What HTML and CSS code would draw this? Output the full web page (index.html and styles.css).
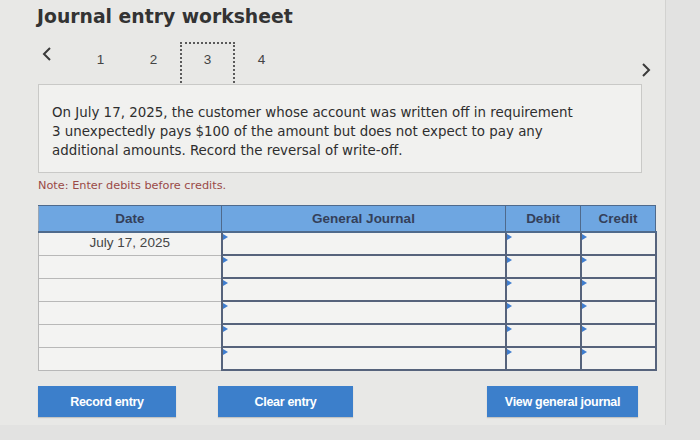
FILE: index.html
```html
<!DOCTYPE html>
<html lang="en">
<head>
<meta charset="utf-8">
<title>Journal entry worksheet</title>
<link rel="stylesheet" href="styles.css">
</head>
<body>
<div class="page">
  <h1 class="title">Journal entry worksheet</h1>
  <div class="nav">
    <span class="prev"><svg width="12" height="16" viewBox="0 0 12 16"><path d="M9 2 L3 8 L9 14" fill="none" stroke="#3a3a3a" stroke-width="2"/></svg></span>
    <div class="tabs">
      <span class="tab">1</span>
      <span class="tab">2</span>
      <span class="tab active">3</span>
      <span class="tab">4</span>
    </div>
    <span class="next"><svg width="12" height="16" viewBox="0 0 12 16"><path d="M3 2 L9 8 L3 14" fill="none" stroke="#3a3a3a" stroke-width="2"/></svg></span>
  </div>
  <div class="question">On July 17, 2025, the customer whose account was written off in requirement 3 unexpectedly pays $100 of the amount but does not expect to pay any additional amounts. Record the reversal of write-off.</div>
  <p class="note">Note: Enter debits before credits.</p>
  <table class="journal">
    <colgroup>
      <col class="c-date"><col class="c-gj"><col class="c-dr"><col class="c-cr">
    </colgroup>
    <thead>
      <tr><th>Date</th><th>General Journal</th><th>Debit</th><th>Credit</th></tr>
    </thead>
    <tbody>
      <tr><td class="date">July 17, 2025</td><td class="in"></td><td class="in"></td><td class="in"></td></tr>
      <tr><td class="date"></td><td class="in"></td><td class="in"></td><td class="in"></td></tr>
      <tr><td class="date"></td><td class="in"></td><td class="in"></td><td class="in"></td></tr>
      <tr><td class="date"></td><td class="in"></td><td class="in"></td><td class="in"></td></tr>
      <tr><td class="date"></td><td class="in"></td><td class="in"></td><td class="in"></td></tr>
      <tr><td class="date"></td><td class="in"></td><td class="in"></td><td class="in"></td></tr>
    </tbody>
  </table>
  <div class="actions">
    <button class="btn record">Record entry</button>
    <button class="btn clear">Clear entry</button>
    <button class="btn view">View general journal</button>
  </div>
</div>
</body>
</html>
```
FILE: styles.css
```css
html, body {
  margin: 0;
  padding: 0;
}
body {
  background: #e2e2e1;
  width: 700px;
  height: 440px;
  overflow: hidden;
}
.page {
  width: 666px;
  height: 425px;
  box-sizing: border-box;
  padding: 0 0 0 38px;
  background: #e8e8e6;
  border-right: 1px solid #d2d2d0;
}
.title {
  margin: 0 0 0 -1px;
  padding: 5px 0 0 0;
  font-family: "DejaVu Sans", sans-serif;
  font-weight: bold;
  font-size: 18.8px;
  line-height: 24px;
  color: #333;
}
.nav {
  display: flex;
  align-items: flex-start;
  width: 616px;
  height: 45px;
  margin-top: 13px;
}
.prev {
  width: 33px;
  padding: 4px 0 0 3px;
}
.tabs {
  display: flex;
}
.tab {
  width: 53px;
  height: 45px;
  box-sizing: border-box;
  text-align: center;
  font-family: "Liberation Sans", Arial, sans-serif;
  font-size: 13.5px;
  color: #444;
  padding-top: 10px;
}
.tab.active {
  width: 55px;
  border: 2px dotted #5a5a5a;
  padding-top: 8px;
}
.next {
  margin-left: auto;
  padding-top: 20px;
  margin-right: 2px;
}
.question {
  position: relative;
  width: 604px;
  box-sizing: border-box;
  margin-top: -3px;
  padding: 18px 60px 12px 13px;
  background: #f1f1ef;
  border: 1px solid #c9c9c7;
  font-family: "DejaVu Sans", sans-serif;
  font-size: 13.4px;
  line-height: 19px;
  color: #2e2e2e;
}
.note {
  margin: 5px 0 0 0;
  font-family: "DejaVu Sans", sans-serif;
  font-size: 11.3px;
  line-height: 16px;
  color: #9a4a46;
}
.journal {
  margin-top: 11px;
  width: 617px;
  border-collapse: collapse;
  table-layout: fixed;
  font-family: "Liberation Sans", Arial, sans-serif;
}
.c-date { width: 183px; }
.c-gj { width: 284px; }
.c-dr { width: 75px; }
.c-cr { width: 75px; }
.journal th {
  height: 25px;
  padding: 0;
  background: #6ea6e1;
  color: #34405a;
  font-size: 13.5px;
  font-weight: bold;
  border: 1px solid #4f6a8c;
  border-bottom: 2px solid #4f6a8c;
}
.journal th:first-child {
  border-left-color: #9aa6b4;
}
.journal td {
  height: 21px;
  padding: 0;
  background: #f3f3f2;
}
.journal td.date {
  border: 1px solid #b8b8b8;
  text-align: center;
  font-size: 13.5px;
  color: #454545;
  vertical-align: top;
  padding-top: 2px;
  height: 19px;
}
.journal td.in {
  position: relative;
  border: 2px solid #56637c;
}
.journal td.in::before {
  content: "";
  position: absolute;
  left: 0;
  top: 1px;
  border-left: 5px solid #3f7dcf;
  border-top: 3px solid transparent;
  border-bottom: 3px solid transparent;
}
.actions {
  display: flex;
  align-items: flex-start;
  margin-top: 15px;
  width: 600px;
}
.btn {
  height: 31px;
  padding: 0;
  border: none;
  background: #3c7fcb;
  color: #fff;
  font-family: "Liberation Sans", Arial, sans-serif;
  font-weight: bold;
  font-size: 12.5px;
  letter-spacing: -0.3px;
  box-shadow: 0 1px 1px rgba(0,0,0,0.15);
}
.record { width: 138px; }
.clear { width: 135px; margin-left: 42px; }
.view { width: 151px; margin-left: auto; }
```
